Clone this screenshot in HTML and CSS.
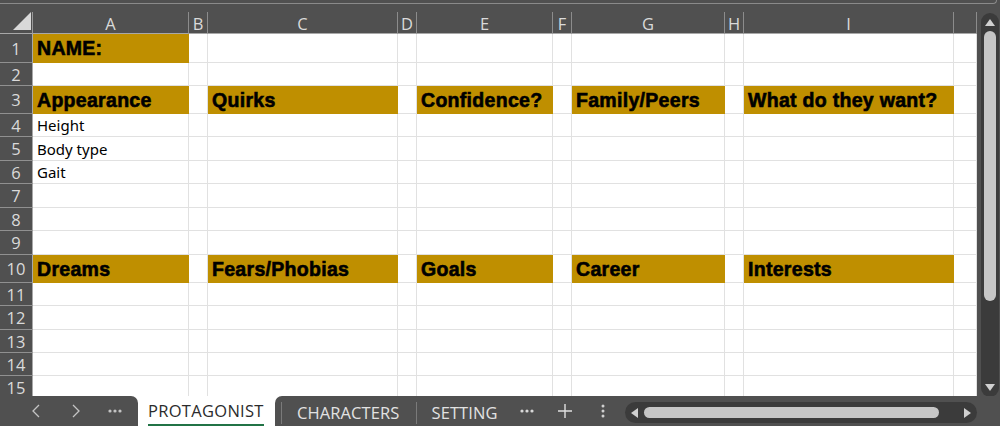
FILE: index.html
```html
<!DOCTYPE html>
<html>
<head>
<meta charset="utf-8">
<link rel="stylesheet" href="styles.css">
</head>
<body>
<div class="app">
  <div class="top"><div class="edge"></div></div>
  <div class="main">
    <div class="grid">
      <div class="corner"><svg width="19" height="19" viewBox="0 0 19 19"><polygon points="18,0 18,18 0,18" fill="#d9d9d9"/></svg></div>
      <div class="ch">A</div><div class="ch">B</div><div class="ch">C</div><div class="ch">D</div><div class="ch">E</div><div class="ch">F</div><div class="ch">G</div><div class="ch">H</div><div class="ch">I</div><div class="ch"></div>

      <div class="rh">1</div><div class="c f">NAME:</div><div class="c"></div><div class="c"></div><div class="c"></div><div class="c"></div><div class="c"></div><div class="c"></div><div class="c"></div><div class="c"></div><div class="c"></div>
      <div class="rh">2</div><div class="c"></div><div class="c"></div><div class="c"></div><div class="c"></div><div class="c"></div><div class="c"></div><div class="c"></div><div class="c"></div><div class="c"></div><div class="c"></div>
      <div class="rh">3</div><div class="c f">Appearance</div><div class="c"></div><div class="c f">Quirks</div><div class="c"></div><div class="c f">Confidence?</div><div class="c"></div><div class="c f">Family/Peers</div><div class="c"></div><div class="c f">What do they want?</div><div class="c"></div>
      <div class="rh">4</div><div class="c t">Height</div><div class="c"></div><div class="c"></div><div class="c"></div><div class="c"></div><div class="c"></div><div class="c"></div><div class="c"></div><div class="c"></div><div class="c"></div>
      <div class="rh">5</div><div class="c t">Body type</div><div class="c"></div><div class="c"></div><div class="c"></div><div class="c"></div><div class="c"></div><div class="c"></div><div class="c"></div><div class="c"></div><div class="c"></div>
      <div class="rh">6</div><div class="c t">Gait</div><div class="c"></div><div class="c"></div><div class="c"></div><div class="c"></div><div class="c"></div><div class="c"></div><div class="c"></div><div class="c"></div><div class="c"></div>
      <div class="rh">7</div><div class="c"></div><div class="c"></div><div class="c"></div><div class="c"></div><div class="c"></div><div class="c"></div><div class="c"></div><div class="c"></div><div class="c"></div><div class="c"></div>
      <div class="rh">8</div><div class="c"></div><div class="c"></div><div class="c"></div><div class="c"></div><div class="c"></div><div class="c"></div><div class="c"></div><div class="c"></div><div class="c"></div><div class="c"></div>
      <div class="rh">9</div><div class="c"></div><div class="c"></div><div class="c"></div><div class="c"></div><div class="c"></div><div class="c"></div><div class="c"></div><div class="c"></div><div class="c"></div><div class="c"></div>
      <div class="rh">10</div><div class="c f">Dreams</div><div class="c"></div><div class="c f">Fears/Phobias</div><div class="c"></div><div class="c f">Goals</div><div class="c"></div><div class="c f">Career</div><div class="c"></div><div class="c f">Interests</div><div class="c"></div>
      <div class="rh">11</div><div class="c"></div><div class="c"></div><div class="c"></div><div class="c"></div><div class="c"></div><div class="c"></div><div class="c"></div><div class="c"></div><div class="c"></div><div class="c"></div>
      <div class="rh">12</div><div class="c"></div><div class="c"></div><div class="c"></div><div class="c"></div><div class="c"></div><div class="c"></div><div class="c"></div><div class="c"></div><div class="c"></div><div class="c"></div>
      <div class="rh">13</div><div class="c"></div><div class="c"></div><div class="c"></div><div class="c"></div><div class="c"></div><div class="c"></div><div class="c"></div><div class="c"></div><div class="c"></div><div class="c"></div>
      <div class="rh">14</div><div class="c"></div><div class="c"></div><div class="c"></div><div class="c"></div><div class="c"></div><div class="c"></div><div class="c"></div><div class="c"></div><div class="c"></div><div class="c"></div>
      <div class="rh">15</div><div class="c"></div><div class="c"></div><div class="c"></div><div class="c"></div><div class="c"></div><div class="c"></div><div class="c"></div><div class="c"></div><div class="c"></div><div class="c"></div>
    </div>
    <div class="vscroll">
      <div class="vtrack">
        <svg class="varrow" width="10" height="8" viewBox="0 0 10 8"><polygon points="5,0 10,7 0,7" fill="#d0d0d0"/></svg>
        <div class="vthumb"></div>
        <div class="vspace"></div>
        <svg class="varrow" width="10" height="8" viewBox="0 0 10 8"><polygon points="0,0 10,0 5,7" fill="#d0d0d0"/></svg>
      </div>
    </div>
  </div>
  <div class="tabbar">
    <div class="nav">
      <svg class="navicon" width="8" height="14" viewBox="0 0 8 14"><polyline points="7,1 1,7 7,13" fill="none" stroke="#c4c4c4" stroke-width="1.3"/></svg>
      <svg class="navicon" width="8" height="14" viewBox="0 0 8 14"><polyline points="1,1 7,7 1,13" fill="none" stroke="#c4c4c4" stroke-width="1.3"/></svg>
      <svg class="navicon" width="14" height="4" viewBox="0 0 14 4"><circle cx="2" cy="2" r="1.6" fill="#c4c4c4"/><circle cx="7" cy="2" r="1.6" fill="#c4c4c4"/><circle cx="12" cy="2" r="1.6" fill="#c4c4c4"/></svg>
    </div>
    <div class="active-tab"><span class="active-label">PROTAGONIST</span></div>
    <div class="rest">
      <div class="sep"></div>
      <div class="tab">CHARACTERS</div>
      <div class="sep"></div>
      <div class="tab">SETTING</div>
      <svg class="dots" width="14" height="4" viewBox="0 0 14 4"><circle cx="2" cy="2" r="1.6" fill="#d8d8d8"/><circle cx="7" cy="2" r="1.6" fill="#d8d8d8"/><circle cx="12" cy="2" r="1.6" fill="#d8d8d8"/></svg>
      <svg class="plus" width="14" height="14" viewBox="0 0 14 14"><path d="M7 0V14M0 7H14" stroke="#e0e0e0" stroke-width="1.4"/></svg>
      <svg class="vdots" width="4" height="14" viewBox="0 0 4 14"><circle cx="2" cy="2" r="1.5" fill="#d0d0d0"/><circle cx="2" cy="7" r="1.5" fill="#d0d0d0"/><circle cx="2" cy="12" r="1.5" fill="#d0d0d0"/></svg>
      <div class="htrack">
        <svg width="8" height="10" viewBox="0 0 8 10"><polygon points="0,5 7,0 7,10" fill="#d0d0d0"/></svg>
        <div class="hthumb"></div>
        <svg width="8" height="10" viewBox="0 0 8 10"><polygon points="8,5 1,0 1,10" fill="#d0d0d0"/></svg>
      </div>
    </div>
  </div>
</div>
</body>
</html>
```

FILE: styles.css
```css
* { box-sizing: border-box; }
html, body { margin: 0; padding: 0; }
body { background: #505050; font-family: "Open Sans", "Noto Sans", sans-serif; }

.app { width: 1000px; height: 426px; display: flex; flex-direction: column; background: #505050; overflow: hidden; }

.top { height: 12px; flex: none; }
.edge { width: 997px; height: 4px; border-bottom: 1px solid #8a8a8a; border-right: 1px solid #8a8a8a; border-bottom-right-radius: 5px; }

.main { display: flex; height: 384px; flex: none; }

.grid {
  width: 977px; height: 384px; overflow: hidden; background: #ffffff;
  display: grid;
  grid-template-columns: 33px 156px 19px 190px 19px 136px 19px 153px 19px 210px 23px;
  grid-template-rows: 22px 28.5px 23px 28px repeat(6, 23.5px) 28.5px repeat(5, 23.3px);
}

.corner { background: #505050; border-right: 1px solid #9a9a9a; border-bottom: 1px solid #a8a8a8; display: flex; align-items: flex-end; justify-content: flex-end; padding: 0 0 2px 0; }
.corner svg { display: block; }

.ch { background: #505050; color: #dadada; font-size: 16.5px; display: flex; align-items: center; justify-content: center; border-right: 1px solid #8c8c8c; border-bottom: 1px solid #a8a8a8; padding-top: 1px; }

.rh { background: #505050; color: #dadada; font-size: 16.5px; display: flex; align-items: center; justify-content: center; border-bottom: 1px solid #909090; border-right: 1px solid #a8a8a8; padding-top: 1px; }

.c { border-right: 1px solid #e1e1e1; border-bottom: 1px solid #e1e1e1; display: flex; align-items: center; padding-left: 4px; white-space: nowrap; overflow: hidden; }

.f { background: #bf8f00; border-color: #bf8f00; font-family: "Liberation Sans", Arial, sans-serif; font-weight: bold; font-size: 19.5px; letter-spacing: 0.3px; color: #000; -webkit-text-stroke: 0.6px #000; padding-top: 2px; }

.t { font-family: "Noto Sans", "Open Sans", sans-serif; font-size: 15px; color: #000; padding-top: 1px; }

.vscroll { width: 23px; height: 384px; background: #505050; padding: 1px 1px 0 4px; }
.vtrack { width: 18px; height: 384px; background: #3b3b3b; border-radius: 9px; display: flex; flex-direction: column; align-items: center; padding: 6px 0 5px 0; }
.varrow { display: block; flex: none; }
.vthumb { width: 12px; height: 270px; margin-top: 4px; background: #c6c6c6; border-radius: 6px; flex: none; }
.vspace { flex: 1; }

.tabbar { height: 30px; flex: none; display: flex; background: #ffffff; }
.nav { width: 138px; background: #505050; border-top-right-radius: 7px; display: flex; align-items: center; padding-left: 32px; }
.navicon { display: block; }
.navicon:nth-child(2) { margin-left: 32px; }
.navicon:nth-child(3) { margin-left: 28px; }

.active-tab { width: 137px; padding-left: 10px; display: flex; align-items: flex-end; }
.active-label { font-size: 16.5px; color: #2b2b2b; line-height: 24px; border-bottom: 2px solid #217346; padding-bottom: 1px; letter-spacing: 0.3px; }

.rest { flex: 1; background: #505050; border-top-left-radius: 7px; display: flex; align-items: center; padding-left: 6px; }
.sep { width: 1px; height: 22px; background: #7a7a7a; margin-top: 4px; }
.tab { font-size: 16.5px; color: #e2e2e2; padding: 3px 16px 0 15px; letter-spacing: 0.1px; }
.dots { margin-left: 6px; display: block; }
.plus { margin-left: 24px; display: block; }
.vdots { margin-left: 29px; display: block; }
.htrack { margin-left: 20px; width: 352px; height: 21px; background: #3b3b3b; border-radius: 11px; display: flex; align-items: center; padding: 0 6px 0 6px; margin-top: 3px; }
.htrack svg { display: block; flex: none; }
.hthumb { flex: 1; height: 11px; background: #c6c6c6; border-radius: 6px; margin: 0 24px 0 5px; }
```
